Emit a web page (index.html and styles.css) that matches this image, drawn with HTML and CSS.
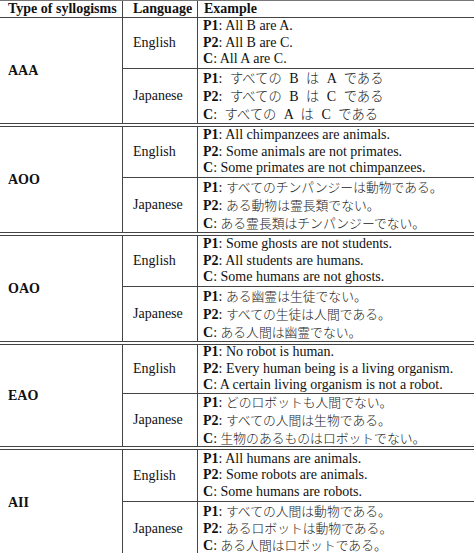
FILE: index.html
```html
<!DOCTYPE html>
<html lang="en">
<head>
<meta charset="utf-8">
<title>Types of syllogisms</title>
<link rel="stylesheet" href="styles.css">
</head>
<body>
<div class="table">
  <div class="head">
    <div class="cell c1">Type of syllogisms</div>
    <div class="cell c2">Language</div>
    <div class="cell c3">Example</div>
  </div>

  <div class="section">
    <div class="cell type">AAA</div>
    <div class="cell lang en">English</div>
    <div class="cell ex en">
      <div><b>P1</b>: All B are A.</div>
      <div><b>P2</b>: All B are C.</div>
      <div><b>C</b>: All A are C.</div>
    </div>
    <div class="cell lang jp">Japanese</div>
    <div class="cell ex jp spaced">
      <div><b>P1</b>: <span class="ja">すべての</span> B <span class="ja">は</span> A <span class="ja">である</span></div>
      <div><b>P2</b>: <span class="ja">すべての</span> B <span class="ja">は</span> C <span class="ja">である</span></div>
      <div><b>C</b>: <span class="ja">すべての</span> A <span class="ja">は</span> C <span class="ja">である</span></div>
    </div>
  </div>

  <div class="section">
    <div class="cell type">AOO</div>
    <div class="cell lang en">English</div>
    <div class="cell ex en">
      <div><b>P1</b>: All chimpanzees are animals.</div>
      <div><b>P2</b>: Some animals are not primates.</div>
      <div><b>C</b>: Some primates are not chimpanzees.</div>
    </div>
    <div class="cell lang jp">Japanese</div>
    <div class="cell ex jp">
      <div><b>P1</b>: <span class="ja">すべてのチンパンジーは動物である。</span></div>
      <div><b>P2</b>: <span class="ja">ある動物は霊長類でない。</span></div>
      <div><b>C</b>: <span class="ja">ある霊長類はチンパンジーでない。</span></div>
    </div>
  </div>

  <div class="section">
    <div class="cell type">OAO</div>
    <div class="cell lang en">English</div>
    <div class="cell ex en">
      <div><b>P1</b>: Some ghosts are not students.</div>
      <div><b>P2</b>: All students are humans.</div>
      <div><b>C</b>: Some humans are not ghosts.</div>
    </div>
    <div class="cell lang jp">Japanese</div>
    <div class="cell ex jp">
      <div><b>P1</b>: <span class="ja">ある幽霊は生徒でない。</span></div>
      <div><b>P2</b>: <span class="ja">すべての生徒は人間である。</span></div>
      <div><b>C</b>: <span class="ja">ある人間は幽霊でない。</span></div>
    </div>
  </div>

  <div class="section compact">
    <div class="cell type">EAO</div>
    <div class="cell lang en">English</div>
    <div class="cell ex en">
      <div><b>P1</b>: No robot is human.</div>
      <div><b>P2</b>: Every human being is a living organism.</div>
      <div><b>C</b>: A certain living organism is not a robot.</div>
    </div>
    <div class="cell lang jp">Japanese</div>
    <div class="cell ex jp">
      <div><b>P1</b>: <span class="ja">どのロボットも人間でない。</span></div>
      <div><b>P2</b>: <span class="ja">すべての人間は生物である。</span></div>
      <div><b>C</b>: <span class="ja">生物のあるものはロボットでない。</span></div>
    </div>
  </div>

  <div class="section last">
    <div class="cell type">AII</div>
    <div class="cell lang en">English</div>
    <div class="cell ex en">
      <div><b>P1</b>: All humans are animals.</div>
      <div><b>P2</b>: Some robots are animals.</div>
      <div><b>C</b>: Some humans are robots.</div>
    </div>
    <div class="cell lang jp">Japanese</div>
    <div class="cell ex jp">
      <div><b>P1</b>: <span class="ja">すべての人間は動物である。</span></div>
      <div><b>P2</b>: <span class="ja">あるロボットは動物である。</span></div>
      <div><b>C</b>: <span class="ja">ある人間はロボットである。</span></div>
    </div>
  </div>
</div>
</body>
</html>
```

FILE: styles.css
```css
* {
  box-sizing: border-box;
}

html, body {
  margin: 0;
  padding: 0;
  background: #ffffff;
}

body {
  font-family: "Liberation Serif", "Times New Roman", serif;
  font-size: 14px;
  color: #111111;
  overflow: hidden;
}

b {
  font-weight: bold;
}

.table {
  width: 474px;
}

.head {
  display: grid;
  grid-template-columns: 123px 75px 1fr;
  height: 18px;
  border-top: 1px solid #777777;
  border-bottom: 1px solid #444444;
  font-weight: bold;
  line-height: 16px;
}

.head .c1,
.head .c2 {
  border-right: 1px solid #444444;
}

.head .c1 {
  padding-left: 8px;
}

.head .c2 {
  padding-left: 10px;
}

.head .c3 {
  padding-left: 6px;
}

.section {
  display: grid;
  grid-template-columns: 123px 75px 1fr;
  grid-template-rows: 51px 54px;
  border-bottom: 1px solid #444444;
}

.section + .section {
  margin-top: 2px;
  border-top: 1px solid #444444;
}

.section.compact {
  grid-template-rows: 49px 52px;
}

.section.last {
  grid-template-rows: 52px 54px;
  border-bottom: none;
}

.cell {
  min-width: 0;
  white-space: nowrap;
}

.type {
  grid-row: 1 / span 2;
  grid-column: 1;
  display: flex;
  align-items: center;
  padding-left: 8px;
  font-weight: bold;
  border-right: 1px solid #444444;
}

.lang {
  grid-column: 2;
  display: flex;
  align-items: center;
  padding-left: 10px;
  border-right: 1px solid #444444;
}

.ex {
  grid-column: 3;
  display: flex;
  flex-direction: column;
  justify-content: center;
  padding-left: 5px;
}

.lang.en,
.ex.en {
  grid-row: 1;
  border-bottom: 1px solid #444444;
}

.lang.jp,
.ex.jp {
  grid-row: 2;
}

.ex.en div {
  line-height: 16.5px;
}

.ex.jp div {
  line-height: 18px;
  height: 18px;
}

.last .ex.jp {
  justify-content: flex-start;
}

.last .ex.jp div {
  line-height: 17px;
  height: 17px;
}

.ja {
  font-family: "Noto Sans CJK JP", "Noto Sans CJK SC", sans-serif;
  font-size: 12.8px;
  font-weight: 300;
  color: #222222;
}

.spaced div {
  word-spacing: 4px;
}

.spaced .ja {
  font-size: 13.3px;
}
```
